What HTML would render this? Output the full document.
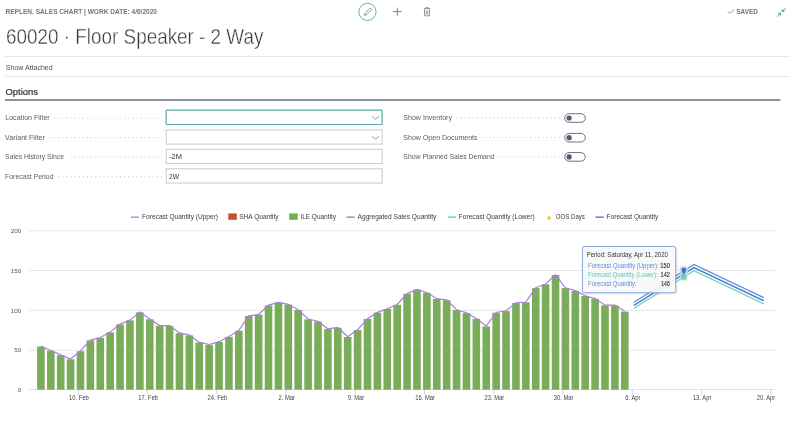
<!DOCTYPE html>
<html><head><meta charset="utf-8">
<style>
html,body{margin:0;padding:0;background:#fff;}
body{width:800px;height:422px;overflow:hidden;position:relative;}
svg{position:absolute;left:0;top:0;will-change:transform;}
</style></head><body>
<svg width="800" height="422" viewBox="0 0 800 422" font-family="Liberation Sans, sans-serif">
 <circle cx="367.5" cy="11.9" r="8.6" fill="none" stroke="#5aa9ad" stroke-width="0.9"/>
 <path d="M364.3 15.3 L365 13.2 L370.2 8.0 L371.7 9.5 L366.5 14.7 Z" fill="none" stroke="#7a7a7a" stroke-width="0.8"/>
 <path d="M397.3 7.6 V15.9 M393.1 11.55 H401.5" stroke="#707587" stroke-width="0.9"/>
 <path d="M423.7 8.6 H430.3 M425.8 8.6 V7.6 H428.2 V8.6 M424.5 9.2 V15.8 H429.5 V9.2 M426.2 10.5 V14.5 M427.8 10.5 V14.5" fill="none" stroke="#7a7f8e" stroke-width="0.8"/>
 <path d="M727.8 11.3 L729.8 13.5 L734.3 9.3" fill="none" stroke="#777" stroke-width="0.8"/>
 <path d="M785.6 8.2 L782.3 11.5 M782.3 9.3 V11.5 H784.5 M777.2 16.6 L780.5 13.3 M778.3 13.3 H780.5 V15.5" fill="none" stroke="#3b9199" stroke-width="0.9"/>
 <rect x="5" y="56" width="785" height="1" fill="#e4e6ea"/>
 <rect x="5" y="76" width="785" height="1" fill="#e4e6ea"/>
 <rect x="5" y="99" width="775.5" height="2" fill="#8e93a0"/>
 <g fill="#c9c9c9"><circle cx="161.50" cy="118.00" r="0.6"/><circle cx="157.39" cy="118.00" r="0.6"/><circle cx="153.28" cy="118.00" r="0.6"/><circle cx="149.17" cy="118.00" r="0.6"/><circle cx="145.06" cy="118.00" r="0.6"/><circle cx="140.95" cy="118.00" r="0.6"/><circle cx="136.84" cy="118.00" r="0.6"/><circle cx="132.73" cy="118.00" r="0.6"/><circle cx="128.62" cy="118.00" r="0.6"/><circle cx="124.51" cy="118.00" r="0.6"/><circle cx="120.40" cy="118.00" r="0.6"/><circle cx="116.29" cy="118.00" r="0.6"/><circle cx="112.18" cy="118.00" r="0.6"/><circle cx="108.07" cy="118.00" r="0.6"/><circle cx="103.96" cy="118.00" r="0.6"/><circle cx="99.85" cy="118.00" r="0.6"/><circle cx="95.74" cy="118.00" r="0.6"/><circle cx="91.63" cy="118.00" r="0.6"/><circle cx="87.52" cy="118.00" r="0.6"/><circle cx="83.41" cy="118.00" r="0.6"/><circle cx="79.30" cy="118.00" r="0.6"/><circle cx="75.19" cy="118.00" r="0.6"/><circle cx="71.08" cy="118.00" r="0.6"/><circle cx="66.97" cy="118.00" r="0.6"/><circle cx="62.86" cy="118.00" r="0.6"/><circle cx="58.75" cy="118.00" r="0.6"/><circle cx="54.64" cy="118.00" r="0.6"/><circle cx="161.50" cy="137.60" r="0.6"/><circle cx="157.39" cy="137.60" r="0.6"/><circle cx="153.28" cy="137.60" r="0.6"/><circle cx="149.17" cy="137.60" r="0.6"/><circle cx="145.06" cy="137.60" r="0.6"/><circle cx="140.95" cy="137.60" r="0.6"/><circle cx="136.84" cy="137.60" r="0.6"/><circle cx="132.73" cy="137.60" r="0.6"/><circle cx="128.62" cy="137.60" r="0.6"/><circle cx="124.51" cy="137.60" r="0.6"/><circle cx="120.40" cy="137.60" r="0.6"/><circle cx="116.29" cy="137.60" r="0.6"/><circle cx="112.18" cy="137.60" r="0.6"/><circle cx="108.07" cy="137.60" r="0.6"/><circle cx="103.96" cy="137.60" r="0.6"/><circle cx="99.85" cy="137.60" r="0.6"/><circle cx="95.74" cy="137.60" r="0.6"/><circle cx="91.63" cy="137.60" r="0.6"/><circle cx="87.52" cy="137.60" r="0.6"/><circle cx="83.41" cy="137.60" r="0.6"/><circle cx="79.30" cy="137.60" r="0.6"/><circle cx="75.19" cy="137.60" r="0.6"/><circle cx="71.08" cy="137.60" r="0.6"/><circle cx="66.97" cy="137.60" r="0.6"/><circle cx="62.86" cy="137.60" r="0.6"/><circle cx="58.75" cy="137.60" r="0.6"/><circle cx="54.64" cy="137.60" r="0.6"/><circle cx="50.53" cy="137.60" r="0.6"/><circle cx="161.50" cy="157.10" r="0.6"/><circle cx="157.39" cy="157.10" r="0.6"/><circle cx="153.28" cy="157.10" r="0.6"/><circle cx="149.17" cy="157.10" r="0.6"/><circle cx="145.06" cy="157.10" r="0.6"/><circle cx="140.95" cy="157.10" r="0.6"/><circle cx="136.84" cy="157.10" r="0.6"/><circle cx="132.73" cy="157.10" r="0.6"/><circle cx="128.62" cy="157.10" r="0.6"/><circle cx="124.51" cy="157.10" r="0.6"/><circle cx="120.40" cy="157.10" r="0.6"/><circle cx="116.29" cy="157.10" r="0.6"/><circle cx="112.18" cy="157.10" r="0.6"/><circle cx="108.07" cy="157.10" r="0.6"/><circle cx="103.96" cy="157.10" r="0.6"/><circle cx="99.85" cy="157.10" r="0.6"/><circle cx="95.74" cy="157.10" r="0.6"/><circle cx="91.63" cy="157.10" r="0.6"/><circle cx="87.52" cy="157.10" r="0.6"/><circle cx="83.41" cy="157.10" r="0.6"/><circle cx="79.30" cy="157.10" r="0.6"/><circle cx="75.19" cy="157.10" r="0.6"/><circle cx="71.08" cy="157.10" r="0.6"/><circle cx="161.50" cy="176.70" r="0.6"/><circle cx="157.39" cy="176.70" r="0.6"/><circle cx="153.28" cy="176.70" r="0.6"/><circle cx="149.17" cy="176.70" r="0.6"/><circle cx="145.06" cy="176.70" r="0.6"/><circle cx="140.95" cy="176.70" r="0.6"/><circle cx="136.84" cy="176.70" r="0.6"/><circle cx="132.73" cy="176.70" r="0.6"/><circle cx="128.62" cy="176.70" r="0.6"/><circle cx="124.51" cy="176.70" r="0.6"/><circle cx="120.40" cy="176.70" r="0.6"/><circle cx="116.29" cy="176.70" r="0.6"/><circle cx="112.18" cy="176.70" r="0.6"/><circle cx="108.07" cy="176.70" r="0.6"/><circle cx="103.96" cy="176.70" r="0.6"/><circle cx="99.85" cy="176.70" r="0.6"/><circle cx="95.74" cy="176.70" r="0.6"/><circle cx="91.63" cy="176.70" r="0.6"/><circle cx="87.52" cy="176.70" r="0.6"/><circle cx="83.41" cy="176.70" r="0.6"/><circle cx="79.30" cy="176.70" r="0.6"/><circle cx="75.19" cy="176.70" r="0.6"/><circle cx="71.08" cy="176.70" r="0.6"/><circle cx="66.97" cy="176.70" r="0.6"/><circle cx="62.86" cy="176.70" r="0.6"/><circle cx="58.75" cy="176.70" r="0.6"/><circle cx="559.60" cy="117.90" r="0.6"/><circle cx="555.49" cy="117.90" r="0.6"/><circle cx="551.38" cy="117.90" r="0.6"/><circle cx="547.27" cy="117.90" r="0.6"/><circle cx="543.16" cy="117.90" r="0.6"/><circle cx="539.05" cy="117.90" r="0.6"/><circle cx="534.94" cy="117.90" r="0.6"/><circle cx="530.83" cy="117.90" r="0.6"/><circle cx="526.72" cy="117.90" r="0.6"/><circle cx="522.61" cy="117.90" r="0.6"/><circle cx="518.50" cy="117.90" r="0.6"/><circle cx="514.39" cy="117.90" r="0.6"/><circle cx="510.28" cy="117.90" r="0.6"/><circle cx="506.17" cy="117.90" r="0.6"/><circle cx="502.06" cy="117.90" r="0.6"/><circle cx="497.95" cy="117.90" r="0.6"/><circle cx="493.84" cy="117.90" r="0.6"/><circle cx="489.73" cy="117.90" r="0.6"/><circle cx="485.62" cy="117.90" r="0.6"/><circle cx="481.51" cy="117.90" r="0.6"/><circle cx="477.40" cy="117.90" r="0.6"/><circle cx="473.29" cy="117.90" r="0.6"/><circle cx="469.18" cy="117.90" r="0.6"/><circle cx="465.07" cy="117.90" r="0.6"/><circle cx="460.96" cy="117.90" r="0.6"/><circle cx="456.85" cy="117.90" r="0.6"/><circle cx="559.60" cy="137.30" r="0.6"/><circle cx="555.49" cy="137.30" r="0.6"/><circle cx="551.38" cy="137.30" r="0.6"/><circle cx="547.27" cy="137.30" r="0.6"/><circle cx="543.16" cy="137.30" r="0.6"/><circle cx="539.05" cy="137.30" r="0.6"/><circle cx="534.94" cy="137.30" r="0.6"/><circle cx="530.83" cy="137.30" r="0.6"/><circle cx="526.72" cy="137.30" r="0.6"/><circle cx="522.61" cy="137.30" r="0.6"/><circle cx="518.50" cy="137.30" r="0.6"/><circle cx="514.39" cy="137.30" r="0.6"/><circle cx="510.28" cy="137.30" r="0.6"/><circle cx="506.17" cy="137.30" r="0.6"/><circle cx="502.06" cy="137.30" r="0.6"/><circle cx="497.95" cy="137.30" r="0.6"/><circle cx="493.84" cy="137.30" r="0.6"/><circle cx="489.73" cy="137.30" r="0.6"/><circle cx="485.62" cy="137.30" r="0.6"/><circle cx="481.51" cy="137.30" r="0.6"/><circle cx="559.60" cy="157.00" r="0.6"/><circle cx="555.49" cy="157.00" r="0.6"/><circle cx="551.38" cy="157.00" r="0.6"/><circle cx="547.27" cy="157.00" r="0.6"/><circle cx="543.16" cy="157.00" r="0.6"/><circle cx="539.05" cy="157.00" r="0.6"/><circle cx="534.94" cy="157.00" r="0.6"/><circle cx="530.83" cy="157.00" r="0.6"/><circle cx="526.72" cy="157.00" r="0.6"/><circle cx="522.61" cy="157.00" r="0.6"/><circle cx="518.50" cy="157.00" r="0.6"/><circle cx="514.39" cy="157.00" r="0.6"/><circle cx="510.28" cy="157.00" r="0.6"/><circle cx="506.17" cy="157.00" r="0.6"/><circle cx="502.06" cy="157.00" r="0.6"/><circle cx="497.95" cy="157.00" r="0.6"/></g>
 <rect x="166.1" y="110.1" width="216" height="14.4" rx="0.8" fill="#fff" stroke="#5aa9ad" stroke-width="1.2"/>
 <rect x="166.2" y="129.9" width="216" height="14.2" fill="#fff" stroke="#cacaca" stroke-width="1"/>
 <rect x="166.2" y="149.4" width="216" height="14.2" fill="#fff" stroke="#cacaca" stroke-width="1"/>
 <rect x="166.2" y="168.8" width="216" height="14.2" fill="#fff" stroke="#cacaca" stroke-width="1"/>
 <path d="M372.2 116.3 L375.5 119.3 L378.8 116.3" fill="none" stroke="#777" stroke-width="0.8"/>
 <path d="M372.2 136.3 L375.5 139.3 L378.8 136.3" fill="none" stroke="#777" stroke-width="0.8"/>
 <g fill="#fff" stroke="#6c7283" stroke-width="1">
  <rect x="564.7" y="113.7" width="20.6" height="8.6" rx="4.3"/>
  <rect x="564.7" y="133.4" width="20.6" height="8.6" rx="4.3"/>
  <rect x="564.7" y="152.6" width="20.6" height="8.6" rx="4.3"/>
 </g>
 <g fill="#505a72">
  <circle cx="569.1" cy="118" r="2.6"/>
  <circle cx="569.1" cy="137.7" r="2.6"/>
  <circle cx="569.1" cy="156.9" r="2.6"/>
 </g>
 <line x1="131" y1="217.15" x2="138.9" y2="217.15" stroke="#7fa8e6" stroke-width="1.5"/>
 <rect x="228.3" y="213.4" width="8.5" height="6.4" fill="#c9502e"/>
 <rect x="289.2" y="213.4" width="8.5" height="6.4" fill="#74ae52"/>
 <line x1="346.4" y1="217.15" x2="354.8" y2="217.15" stroke="#b17ee6" stroke-width="1.5"/>
 <line x1="447.8" y1="217.15" x2="456.2" y2="217.15" stroke="#6fd3bd" stroke-width="1.5"/>
 <path d="M547 219.2 L549.05 215 L551.1 219.2 Z" fill="#f5bd1e"/>
 <line x1="595.4" y1="217.15" x2="603.8" y2="217.15" stroke="#4f86d6" stroke-width="1.5"/>
 <g stroke="#e6e6e6" stroke-width="1"><line x1="28.9" y1="230.80" x2="775.5" y2="230.80"/><line x1="28.9" y1="270.50" x2="775.5" y2="270.50"/><line x1="28.9" y1="310.40" x2="775.5" y2="310.40"/><line x1="28.9" y1="350.20" x2="775.5" y2="350.20"/></g>
 <line x1="28.9" y1="389.5" x2="775.5" y2="389.5" stroke="#dde3ee" stroke-width="1"/>
 <g stroke="#ccd6eb" stroke-width="1"><line x1="78.40" y1="390" x2="78.40" y2="394.5"/><line x1="147.63" y1="390" x2="147.63" y2="394.5"/><line x1="216.87" y1="390" x2="216.87" y2="394.5"/><line x1="286.11" y1="390" x2="286.11" y2="394.5"/><line x1="355.34" y1="390" x2="355.34" y2="394.5"/><line x1="424.58" y1="390" x2="424.58" y2="394.5"/><line x1="493.81" y1="390" x2="493.81" y2="394.5"/><line x1="563.04" y1="390" x2="563.04" y2="394.5"/><line x1="632.28" y1="390" x2="632.28" y2="394.5"/><line x1="701.51" y1="390" x2="701.51" y2="394.5"/><line x1="770.75" y1="390" x2="770.75" y2="394.5"/></g>
 <text x="5.50" y="14.30" font-size="7.41" font-weight="bold" fill="#6f7686" textLength="151.50" lengthAdjust="spacingAndGlyphs">REPLEN. SALES CHART | WORK DATE: 4/6/2020</text>
<text x="736.25" y="14.40" font-size="7.70" font-weight="bold" fill="#6f7686" textLength="21.50" lengthAdjust="spacingAndGlyphs">SAVED</text>
<text stroke="#fff" stroke-width="0.4" x="6.10" y="43.60" font-size="21.58" font-weight="normal" fill="#3a3a3a" textLength="257.30" lengthAdjust="spacingAndGlyphs">60020 · Floor Speaker - 2 Way</text>
<text x="5.80" y="69.90" font-size="7.27" font-weight="normal" fill="#505050" textLength="46.90" lengthAdjust="spacingAndGlyphs">Show Attached</text>
<text stroke="#333" stroke-width="0.22" x="5.50" y="94.80" font-size="8.87" font-weight="normal" fill="#333333" textLength="32.50" lengthAdjust="spacingAndGlyphs">Options</text>
<text x="5.25" y="120.00" font-size="7.12" font-weight="normal" fill="#585d6a" textLength="44.45" lengthAdjust="spacingAndGlyphs">Location Filter</text>
<text x="5.10" y="139.80" font-size="7.12" font-weight="normal" fill="#585d6a" textLength="39.70" lengthAdjust="spacingAndGlyphs">Variant Filter</text>
<text x="5.10" y="159.10" font-size="7.12" font-weight="normal" fill="#585d6a" textLength="58.90" lengthAdjust="spacingAndGlyphs">Sales History Since</text>
<text x="5.10" y="178.80" font-size="7.12" font-weight="normal" fill="#585d6a" textLength="48.40" lengthAdjust="spacingAndGlyphs">Forecast Period</text>
<text x="403.30" y="120.00" font-size="7.12" font-weight="normal" fill="#585d6a" textLength="48.70" lengthAdjust="spacingAndGlyphs">Show Inventory</text>
<text x="403.30" y="139.60" font-size="7.12" font-weight="normal" fill="#585d6a" textLength="74.30" lengthAdjust="spacingAndGlyphs">Show Open Documents</text>
<text x="403.30" y="159.10" font-size="7.12" font-weight="normal" fill="#585d6a" textLength="91.30" lengthAdjust="spacingAndGlyphs">Show Planned Sales Demand</text>
<text x="169.00" y="159.20" font-size="6.98" font-weight="normal" fill="#333333" textLength="13.00" lengthAdjust="spacingAndGlyphs">-2M</text>
<text x="169.00" y="178.60" font-size="6.98" font-weight="normal" fill="#333333" textLength="10.00" lengthAdjust="spacingAndGlyphs">2W</text>
<text x="142.10" y="219.10" font-size="6.83" font-weight="normal" fill="#3d3d3d" textLength="75.90" lengthAdjust="spacingAndGlyphs">Forecast Quantity (Upper)</text>
<text x="239.20" y="219.10" font-size="6.83" font-weight="normal" fill="#3d3d3d" textLength="39.40" lengthAdjust="spacingAndGlyphs">SHA Quantity</text>
<text x="300.40" y="219.10" font-size="6.83" font-weight="normal" fill="#3d3d3d" textLength="35.50" lengthAdjust="spacingAndGlyphs">ILE Quantity</text>
<text x="357.60" y="219.10" font-size="6.83" font-weight="normal" fill="#3d3d3d" textLength="78.80" lengthAdjust="spacingAndGlyphs">Aggregated Sales Quantity</text>
<text x="458.80" y="219.10" font-size="6.83" font-weight="normal" fill="#3d3d3d" textLength="75.80" lengthAdjust="spacingAndGlyphs">Forecast Quantity (Lower)</text>
<text x="555.80" y="219.10" font-size="6.83" font-weight="normal" fill="#3d3d3d" textLength="29.05" lengthAdjust="spacingAndGlyphs">OOS Days</text>
<text x="606.60" y="219.10" font-size="6.83" font-weight="normal" fill="#3d3d3d" textLength="51.75" lengthAdjust="spacingAndGlyphs">Forecast Quantity</text>
<text x="69.12" y="400.00" font-size="6.40" font-weight="normal" fill="#444444" textLength="19.75" lengthAdjust="spacingAndGlyphs">10. Feb</text>
<text x="138.36" y="400.00" font-size="6.40" font-weight="normal" fill="#444444" textLength="19.75" lengthAdjust="spacingAndGlyphs">17. Feb</text>
<text x="207.59" y="400.00" font-size="6.40" font-weight="normal" fill="#444444" textLength="19.75" lengthAdjust="spacingAndGlyphs">24. Feb</text>
<text x="278.45" y="400.00" font-size="6.40" font-weight="normal" fill="#444444" textLength="16.51" lengthAdjust="spacingAndGlyphs">2. Mar</text>
<text x="347.69" y="400.00" font-size="6.40" font-weight="normal" fill="#444444" textLength="16.51" lengthAdjust="spacingAndGlyphs">9. Mar</text>
<text x="415.30" y="400.00" font-size="6.40" font-weight="normal" fill="#444444" textLength="19.75" lengthAdjust="spacingAndGlyphs">16. Mar</text>
<text x="484.54" y="400.00" font-size="6.40" font-weight="normal" fill="#444444" textLength="19.75" lengthAdjust="spacingAndGlyphs">23. Mar</text>
<text x="553.77" y="400.00" font-size="6.40" font-weight="normal" fill="#444444" textLength="19.75" lengthAdjust="spacingAndGlyphs">30. Mar</text>
<text x="625.27" y="400.00" font-size="6.40" font-weight="normal" fill="#444444" textLength="15.22" lengthAdjust="spacingAndGlyphs">6. Apr</text>
<text x="692.89" y="400.00" font-size="6.40" font-weight="normal" fill="#444444" textLength="18.46" lengthAdjust="spacingAndGlyphs">13. Apr</text>
<text x="756.84" y="400.00" font-size="6.40" font-weight="normal" fill="#444444" textLength="18.46" lengthAdjust="spacingAndGlyphs">20. Apr</text>
<text x="10.76" y="233.00" font-size="5.96" font-weight="normal" fill="#555555" textLength="10.37" lengthAdjust="spacingAndGlyphs">200</text>
<text x="10.76" y="272.70" font-size="5.96" font-weight="normal" fill="#555555" textLength="10.37" lengthAdjust="spacingAndGlyphs">150</text>
<text x="10.76" y="312.60" font-size="5.96" font-weight="normal" fill="#555555" textLength="10.37" lengthAdjust="spacingAndGlyphs">100</text>
<text x="14.22" y="352.40" font-size="5.96" font-weight="normal" fill="#555555" textLength="6.92" lengthAdjust="spacingAndGlyphs">50</text>
<text x="17.67" y="392.10" font-size="5.96" font-weight="normal" fill="#555555" textLength="3.46" lengthAdjust="spacingAndGlyphs">0</text>
 <g fill="#7aad5a"><rect x="37.10" y="346.50" width="7.60" height="43.25"/>
<rect x="47.00" y="350.80" width="7.60" height="38.95"/>
<rect x="56.89" y="355.20" width="7.60" height="34.55"/>
<rect x="66.79" y="359.30" width="7.60" height="30.45"/>
<rect x="76.69" y="351.20" width="7.60" height="38.55"/>
<rect x="86.58" y="340.40" width="7.60" height="49.35"/>
<rect x="96.48" y="337.80" width="7.60" height="51.95"/>
<rect x="106.38" y="332.40" width="7.60" height="57.35"/>
<rect x="116.27" y="324.40" width="7.60" height="65.35"/>
<rect x="126.17" y="320.40" width="7.60" height="69.35"/>
<rect x="136.07" y="312.40" width="7.60" height="77.35"/>
<rect x="145.96" y="319.30" width="7.60" height="70.45"/>
<rect x="155.86" y="325.90" width="7.60" height="63.85"/>
<rect x="165.76" y="325.90" width="7.60" height="63.85"/>
<rect x="175.65" y="333.20" width="7.60" height="56.55"/>
<rect x="185.55" y="335.40" width="7.60" height="54.35"/>
<rect x="195.45" y="342.50" width="7.60" height="47.25"/>
<rect x="205.34" y="344.80" width="7.60" height="44.95"/>
<rect x="215.24" y="342.00" width="7.60" height="47.75"/>
<rect x="225.14" y="336.90" width="7.60" height="52.85"/>
<rect x="235.03" y="330.70" width="7.60" height="59.05"/>
<rect x="244.93" y="316.10" width="7.60" height="73.65"/>
<rect x="254.83" y="314.70" width="7.60" height="75.05"/>
<rect x="264.72" y="305.40" width="7.60" height="84.35"/>
<rect x="274.62" y="302.60" width="7.60" height="87.15"/>
<rect x="284.52" y="304.60" width="7.60" height="85.15"/>
<rect x="294.41" y="310.00" width="7.60" height="79.75"/>
<rect x="304.31" y="319.30" width="7.60" height="70.45"/>
<rect x="314.21" y="321.50" width="7.60" height="68.25"/>
<rect x="324.10" y="329.10" width="7.60" height="60.65"/>
<rect x="334.00" y="327.80" width="7.60" height="61.95"/>
<rect x="343.89" y="337.00" width="7.60" height="52.75"/>
<rect x="353.79" y="330.10" width="7.60" height="59.65"/>
<rect x="363.69" y="319.00" width="7.60" height="70.75"/>
<rect x="373.58" y="312.70" width="7.60" height="77.05"/>
<rect x="383.48" y="309.00" width="7.60" height="80.75"/>
<rect x="393.38" y="304.80" width="7.60" height="84.95"/>
<rect x="403.27" y="293.90" width="7.60" height="95.85"/>
<rect x="413.17" y="289.70" width="7.60" height="100.05"/>
<rect x="423.07" y="292.80" width="7.60" height="96.95"/>
<rect x="432.96" y="299.00" width="7.60" height="90.75"/>
<rect x="442.86" y="300.20" width="7.60" height="89.55"/>
<rect x="452.76" y="310.05" width="7.60" height="79.70"/>
<rect x="462.65" y="313.10" width="7.60" height="76.65"/>
<rect x="472.55" y="318.80" width="7.60" height="70.95"/>
<rect x="482.45" y="326.50" width="7.60" height="63.25"/>
<rect x="492.34" y="312.80" width="7.60" height="76.95"/>
<rect x="502.24" y="311.10" width="7.60" height="78.65"/>
<rect x="512.14" y="303.10" width="7.60" height="86.65"/>
<rect x="522.03" y="302.30" width="7.60" height="87.45"/>
<rect x="531.93" y="288.10" width="7.60" height="101.65"/>
<rect x="541.83" y="284.30" width="7.60" height="105.45"/>
<rect x="551.72" y="275.00" width="7.60" height="114.75"/>
<rect x="561.62" y="288.10" width="7.60" height="101.65"/>
<rect x="571.52" y="290.90" width="7.60" height="98.85"/>
<rect x="581.41" y="296.10" width="7.60" height="93.65"/>
<rect x="591.31" y="298.85" width="7.60" height="90.90"/>
<rect x="601.21" y="305.45" width="7.60" height="84.30"/>
<rect x="611.10" y="305.40" width="7.60" height="84.35"/>
<rect x="621.00" y="311.60" width="7.60" height="78.15"/></g>
 <polyline points="40.90,346.20 50.80,350.50 60.69,354.90 70.59,359.00 80.49,350.90 90.38,340.10 100.28,337.50 110.18,332.10 120.07,324.10 129.97,320.10 139.87,312.10 149.76,319.00 159.66,325.60 169.56,325.60 179.45,332.90 189.35,335.10 199.25,342.20 209.14,344.50 219.04,341.70 228.94,336.60 238.83,330.40 248.73,315.80 258.63,314.40 268.52,305.10 278.42,302.30 288.32,304.30 298.21,309.70 308.11,319.00 318.01,321.20 327.90,328.80 337.80,327.50 347.69,336.70 357.59,329.80 367.49,318.70 377.38,312.40 387.28,308.70 397.18,304.50 407.07,293.60 416.97,289.40 426.87,292.50 436.76,298.70 446.66,299.90 456.56,309.75 466.45,312.80 476.35,318.50 486.25,326.20 496.14,312.50 506.04,310.80 515.94,302.80 525.83,302.00 535.73,287.80 545.63,284.00 555.52,274.70 565.42,287.80 575.32,290.60 585.21,295.80 595.11,298.55 605.01,305.15 614.90,305.10 624.80,311.30" fill="none" stroke="#ad7ae6" stroke-width="1.2"/>
 <polyline points="634.00,302.20 693.90,264.50 763.80,297.60" fill="none" stroke="#5b8fdc" stroke-width="1.3"/>
 <polyline points="634.00,305.30 693.90,267.60 763.80,300.70" fill="none" stroke="#4a7fd3" stroke-width="1.5"/>
 <polyline points="634.00,308.30 693.90,270.70 763.80,303.90" fill="none" stroke="#72d1b9" stroke-width="1.2"/>
 <rect x="679.9" y="273.2" width="7.8" height="8" rx="2.5" fill="#bfeadd" opacity="0.6"/>
 <circle cx="683.8" cy="270" r="4.6" fill="#c9dbf5" opacity="0.8"/>
 <rect x="681.2" y="274.6" width="5.2" height="5" fill="#6fd0b7"/>
 <path d="M681.3 269.6 C681.3 267.2 686.3 267.2 686.3 269.6 C686.3 271.2 684.6 273.4 683.8 275.3 C683 273.4 681.3 271.2 681.3 269.6 Z" fill="#3f76cf"/>
 <rect x="583.4" y="247.5" width="93.3" height="46.2" rx="2" fill="none" stroke="#000" stroke-opacity="0.07" stroke-width="2"/>
 <rect x="582.4" y="246.5" width="93.3" height="46.2" rx="2" fill="#f8f8f8" fill-opacity="0.92" stroke="#84a9de" stroke-width="1"/>
 <text x="586.70" y="257.10" font-size="6.98" font-weight="normal" fill="#333333" textLength="81.20" lengthAdjust="spacingAndGlyphs">Period: Saturday, Apr 11, 2020</text>
<text x="588.00" y="267.70" font-size="6.98" font-weight="normal" fill="#5b8fdc" textLength="70.70" lengthAdjust="spacingAndGlyphs">Forecast Quantity (Upper):</text>
<text stroke="#333" stroke-width="0.15" x="660.30" y="267.70" font-size="6.98" font-weight="normal" fill="#333333" textLength="9.60" lengthAdjust="spacingAndGlyphs">150</text>
<text x="588.00" y="276.50" font-size="6.98" font-weight="normal" fill="#62c8ab" textLength="69.80" lengthAdjust="spacingAndGlyphs">Forecast Quantity (Lower):</text>
<text stroke="#333" stroke-width="0.15" x="660.60" y="276.50" font-size="6.98" font-weight="normal" fill="#333333" textLength="9.30" lengthAdjust="spacingAndGlyphs">142</text>
<text x="588.00" y="285.80" font-size="6.98" font-weight="normal" fill="#5b8fdc" textLength="48.75" lengthAdjust="spacingAndGlyphs">Forecast Quantity:</text>
<text stroke="#333" stroke-width="0.15" x="661.20" y="285.80" font-size="6.98" font-weight="normal" fill="#333333" textLength="8.70" lengthAdjust="spacingAndGlyphs">146</text>
</svg>
</body></html>
